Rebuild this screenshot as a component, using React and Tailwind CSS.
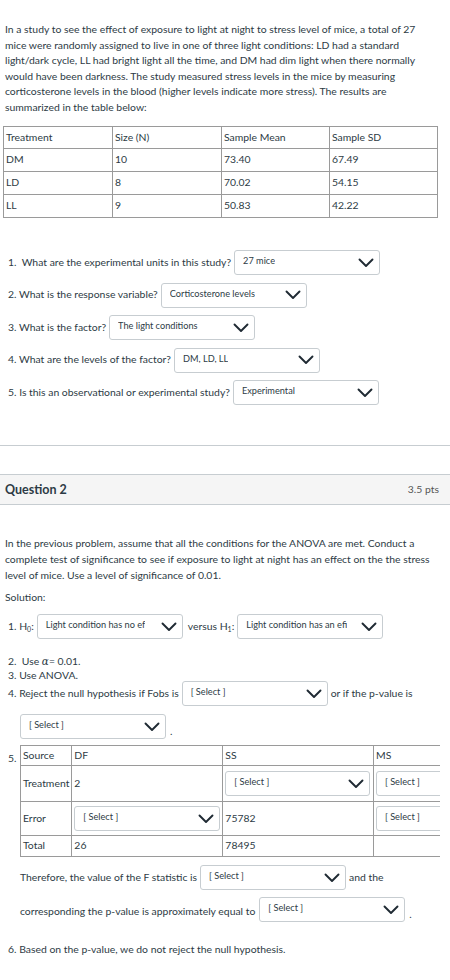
import React from "react";

function Chevron() {
  return (
    <svg width="16" height="10" viewBox="0 0 16 10" className="shrink-0">
      <path d="M1.5 1.5 L8 8 L14.5 1.5" fill="none" stroke="#1f2a33" strokeWidth="1.9" strokeLinecap="round" strokeLinejoin="round" />
    </svg>
  );
}

function Select({ value = "[ Select ]", w = "w-[146px]" }) {
  return (
    <div className={`${w} h-[25px] shrink-0 flex items-center justify-between bg-white border border-[#c7cdd1] rounded-[3px] pl-[8px] pr-[5px]`}>
      <span className="text-[9.2px] leading-none whitespace-nowrap overflow-hidden mb-[3px]">{value}</span>
      <Chevron />
    </div>
  );
}

const cell = "border border-[#9a9a9a] px-[2px] text-left font-normal";

function App() {
  const stats = [
    ["DM", "10", "73.40", "67.49"],
    ["LD", "8", "70.02", "54.15"],
    ["LL", "9", "50.83", "42.22"],
  ];

  return (
    <div className="w-[450px] min-h-[980px] bg-white text-[#2d3b45] text-[10.4px] leading-[15.5px] overflow-hidden" style={{ fontFamily: "Lato, 'Open Sans', sans-serif" }}>
      {/* Question 1 */}
      <div className="px-[5px] pt-[22px]">
        <p className="w-[430px]">
          In a study to see the effect of exposure to light at night to stress level of mice, a total of 27 mice were
          randomly assigned to live in one of three light conditions: LD had a standard light/dark cycle, LL had bright
          light all the time, and DM had dim light when there normally would have been darkness. The study measured
          stress levels in the mice by measuring corticosterone levels in the blood (higher levels indicate more
          stress). The results are summarized in the table below:
        </p>

        <table className="mt-[11px] w-[435px] border-collapse ml-[-2px]">
          <thead>
            <tr className="h-[22px]">
              <th className={`${cell} w-[109px]`}>Treatment</th>
              <th className={`${cell} w-[109px]`}>Size (N)</th>
              <th className={`${cell} w-[108px]`}>Sample Mean</th>
              <th className={cell}>Sample SD</th>
            </tr>
          </thead>
          <tbody>
            {stats.map((r) => (
              <tr key={r[0]} className="h-[23px]">
                {r.map((c, i) => (
                  <td key={i} className={cell}>{c}</td>
                ))}
              </tr>
            ))}
          </tbody>
        </table>

        <div className="mt-[32px] pl-[3px] flex flex-col gap-[7.5px]">
          <div className="flex items-center gap-[3px]">
            <span>1.&nbsp; What are the experimental units in this study?</span>
            <Select value="27 mice" />
          </div>
          <div className="flex items-center gap-[3px]">
            <span>2. What is the response variable?</span>
            <Select value="Corticosterone levels" />
          </div>
          <div className="flex items-center gap-[3px]">
            <span>3. What is the factor?</span>
            <Select value="The light conditions" />
          </div>
          <div className="flex items-center gap-[3px]">
            <span>4. What are the levels of the factor?</span>
            <Select value="DM, LD, LL" />
          </div>
          <div className="flex items-center gap-[3px]">
            <span>5. Is this an observational or experimental study?</span>
            <Select value="Experimental" />
          </div>
        </div>
      </div>

      <div className="mt-[40px] border-t border-[#c7cdd1]" />

      {/* Question 2 header */}
      <div className="mt-[28px] h-[31px] bg-[#f5f5f5] border-y border-[#c7cdd1] flex items-center justify-between px-[5px]">
        <span className="text-[12.5px] font-bold text-[#2d3b45]">Question 2</span>
        <span className="text-[10.4px] text-[#555] mr-[6px]">3.5 pts</span>
      </div>

      <div className="px-[5px] pt-[30px]">
        <p className="leading-[16px]">
          In the previous problem, assume that all the conditions for the ANOVA are met. Conduct a complete test of
          significance to see if exposure to light at night has an effect on the the stress level of mice. Use a level
          of significance of 0.01.
        </p>
        <p className="mt-[6px] leading-[16px]">Solution:</p>

        <div className="pl-[3px]">
          <div className="mt-[9px] flex items-center gap-[3px]">
            <span>
              1. H<sub className="text-[7px]">0</sub>:
            </span>
            <Select value="Light condition has no ef" />
            <span className="ml-[2px]">
              versus H<sub className="text-[7px]">1</sub>:
            </span>
            <Select value="Light condition has an efi" />
          </div>

          <p className="mt-[16px] leading-[13.5px]">
            2.&nbsp; Use <span className="italic" style={{ fontFamily: "'DejaVu Serif', serif" }}>α</span>= 0.01.
          </p>
          <p className="leading-[13.5px]">3. Use ANOVA.</p>

          <div className="mt-[-1px] flex items-center gap-[3px]">
            <span>4. Reject the null hypothesis if Fobs is</span>
            <Select />
            <span>or if the p-value is</span>
          </div>
          <div className="mt-[8px] ml-[12px] flex items-end gap-[4px]">
            <Select />
            <span>.</span>
          </div>

          {/* ANOVA table */}
          <div className="mt-[6px] flex items-start">
            <span className="w-[12px] shrink-0 mt-[6px]">5.</span>
            <div className="w-[420px] overflow-hidden">
              <table className="border-collapse w-[505px]">
                <tbody>
                  <tr className="h-[20px]">
                    <td className={`${cell} w-[51px]`}>Source</td>
                    <td className={`${cell} w-[150px]`}>DF</td>
                    <td className={`${cell} w-[152px]`}>SS</td>
                    <td className={cell}>MS</td>
                  </tr>
                  <tr className="h-[36px]">
                    <td className={cell}>Treatment</td>
                    <td className={cell}>2</td>
                    <td className={cell}><Select w="w-[145px]" /></td>
                    <td className={cell}><Select /></td>
                  </tr>
                  <tr className="h-[34px]">
                    <td className={cell}>Error</td>
                    <td className={cell}><Select /></td>
                    <td className={cell}>75782</td>
                    <td className={cell}><Select /></td>
                  </tr>
                  <tr className="h-[21px]">
                    <td className={cell}>Total</td>
                    <td className={cell}>26</td>
                    <td className={cell}>78495</td>
                    <td className={cell}></td>
                  </tr>
                </tbody>
              </table>
            </div>
          </div>

          <div className="ml-[12px]">
            <div className="mt-[8px] flex items-center gap-[3px]">
              <span>Therefore, the value of the F statistic is</span>
              <Select />
              <span>and the</span>
            </div>
            <div className="mt-[7px] flex items-end gap-[4px]">
              <span className="mb-[3px]">corresponding the p-value is approximately equal to</span>
              <Select />
              <span>.</span>
            </div>
          </div>

          <p className="mt-[20px]">6. Based on the p-value, we do not reject the null hypothesis.</p>
        </div>
      </div>
    </div>
  );
}

export default App;
